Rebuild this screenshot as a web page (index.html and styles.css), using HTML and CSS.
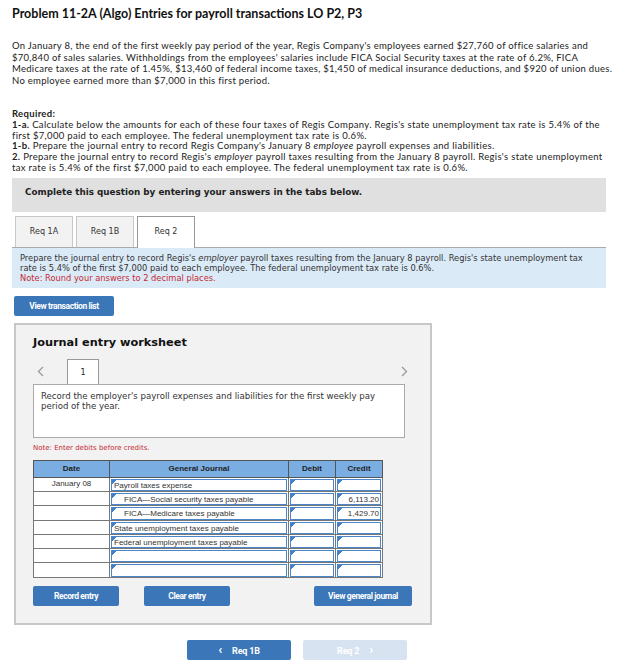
FILE: index.html
```html
<!DOCTYPE html>
<html lang="en">
<head>
    <meta charset="UTF-8">
    <title>Problem 11-2A (Algo)</title>
    <link rel="stylesheet" href="styles.css">
</head>
<body>
    <div class="page">
        <h1>Problem 11-2A (Algo) Entries for payroll transactions LO P2, P3</h1>
        <p class="intro">On January 8, the end of the first weekly pay period of the year, Regis Company's employees earned $27,760 of office salaries and $70,840 of sales salaries. Withholdings from the employees' salaries include FICA Social Security taxes at the rate of 6.2%, FICA Medicare taxes at the rate of 1.45%, $13,460 of federal income taxes, $1,450 of medical insurance deductions, and $920 of union dues. No employee earned more than $7,000 in this first period.</p>

        <div class="required">
            <b>Required:</b><br>
            <b>1-a.</b> Calculate below the amounts for each of these four taxes of Regis Company. Regis's state unemployment tax rate is 5.4% of the first $7,000 paid to each employee. The federal unemployment tax rate is 0.6%.<br>
            <b>1-b.</b> Prepare the journal entry to record Regis Company's January 8 <i>employee</i> payroll expenses and liabilities.<br>
            <b>2.</b> Prepare the journal entry to record Regis's <i>employer</i> payroll taxes resulting from the January 8 payroll. Regis's state unemployment tax rate is 5.4% of the first $7,000 paid to each employee. The federal unemployment tax rate is 0.6%.
        </div>

        <div class="complete-bar">Complete this question by entering your answers in the tabs below.</div>

        <div class="tabs">
            <div class="tab">Req 1A</div>
            <div class="tab">Req 1B</div>
            <div class="tab active">Req 2</div>
        </div>
        <div class="instructions">
            Prepare the journal entry to record Regis's <i>employer</i> payroll taxes resulting from the January 8 payroll. Regis's state unemployment tax rate is 5.4% of the first $7,000 paid to each employee. The federal unemployment tax rate is 0.6%.<br>
            <span class="red">Note: Round your answers to 2 decimal places.</span>
        </div>

        <button class="btn btn-list">View transaction list</button>

        <div class="worksheet">
            <h2>Journal entry worksheet</h2>
            <div class="pager">
                <span class="arrow">
                    <svg width="7" height="11" viewBox="0 0 7 11"><polyline points="6,1 1.5,5.5 6,10" fill="none" stroke="#9a9a9a" stroke-width="1.3"/></svg>
                </span>
                <span class="page-tab">1</span>
                <span class="arrow arrow-right">
                    <svg width="7" height="11" viewBox="0 0 7 11"><polyline points="1,1 5.5,5.5 1,10" fill="none" stroke="#9a9a9a" stroke-width="1.3"/></svg>
                </span>
            </div>
            <div class="record-box">Record the employer's payroll expenses and liabilities for the first weekly pay period of the year.</div>
            <div class="note">Note: Enter debits before credits.</div>

            <table class="journal">
                <thead>
                    <tr>
                        <th class="col-date">Date</th>
                        <th class="col-acct">General Journal</th>
                        <th class="col-num">Debit</th>
                        <th class="col-num">Credit</th>
                    </tr>
                </thead>
                <tbody>
                    <tr>
                        <td class="date">January 08</td>
                        <td><div class="cell">Payroll taxes expense</div></td>
                        <td><div class="cell"></div></td>
                        <td><div class="cell"></div></td>
                    </tr>
                    <tr>
                        <td class="date"></td>
                        <td><div class="cell indent">FICA—Social security taxes payable</div></td>
                        <td><div class="cell"></div></td>
                        <td><div class="cell num">6,113.20</div></td>
                    </tr>
                    <tr>
                        <td class="date"></td>
                        <td><div class="cell indent">FICA—Medicare taxes payable</div></td>
                        <td><div class="cell"></div></td>
                        <td><div class="cell num">1,429.70</div></td>
                    </tr>
                    <tr>
                        <td class="date"></td>
                        <td><div class="cell">State unemployment taxes payable</div></td>
                        <td><div class="cell"></div></td>
                        <td><div class="cell"></div></td>
                    </tr>
                    <tr>
                        <td class="date"></td>
                        <td><div class="cell">Federal unemployment taxes payable</div></td>
                        <td><div class="cell"></div></td>
                        <td><div class="cell"></div></td>
                    </tr>
                    <tr>
                        <td class="date"></td>
                        <td><div class="cell"></div></td>
                        <td><div class="cell"></div></td>
                        <td><div class="cell"></div></td>
                    </tr>
                    <tr>
                        <td class="date"></td>
                        <td><div class="cell"></div></td>
                        <td><div class="cell"></div></td>
                        <td><div class="cell"></div></td>
                    </tr>
                </tbody>
            </table>

            <div class="actions">
                <button class="btn btn-action">Record entry</button>
                <button class="btn btn-action btn-clear">Clear entry</button>
                <button class="btn btn-action btn-view">View general journal</button>
            </div>
        </div>

        <div class="nav">
            <button class="btn btn-nav"><span class="chev">&lsaquo;</span>Req 1B</button>
            <button class="btn btn-nav disabled">Req 2<span class="chev chev-r">&rsaquo;</span></button>
        </div>
    </div>
</body>
</html>
```

FILE: styles.css
```css
body {
    margin: 0;
    background: #fff;
    color: #222;
    font-family: Lato, "Open Sans", sans-serif;
}
.page {
    width: 594px;
    padding: 6px 12px 0 12px;
}
h1 {
    font-size: 12.5px;
    font-weight: bold;
    margin: 0 0 19px 0;
    color: #111;
}
.intro {
    font-size: 9.5px;
    line-height: 11.5px;
    letter-spacing: 0.28px;
    margin: 0 -10px 23px 0;
}
.required {
    font-size: 9.5px;
    line-height: 10.8px;
    letter-spacing: 0.32px;
    margin-bottom: 4px;
}
.complete-bar {
    background: #e0e0e0;
    height: 34px;
    box-sizing: border-box;
    padding: 9px 0 0 13px;
    font-family: "DejaVu Sans", Verdana, sans-serif;
    font-size: 8.8px;
    font-weight: bold;
    color: #222;
}
.tabs {
    display: flex;
    gap: 3px;
    margin: 4px 0 0 3px;
}
.tab {
    width: 56px;
    height: 30px;
    line-height: 30px;
    text-align: center;
    background: #f2f2f2;
    border: 1px solid #c8c8c8;
    border-bottom: none;
    font-family: "DejaVu Sans", Verdana, sans-serif;
    font-size: 8px;
    color: #333;
}
.tab.active {
    background: #fff;
    border-color: #999;
    height: 31px;
    margin-bottom: -1px;
}
.instructions {
    background: #dbeaf7;
    border-top: 1px solid #aaa;
    padding: 5px 16px 4px 8px;
    font-family: "DejaVu Sans", Verdana, sans-serif;
    font-size: 8.3px;
    line-height: 10.3px;
    color: #333;
}
.red {
    color: #c52a35;
}
.btn {
    border: none;
    border-radius: 2px;
    background: #3b76b9;
    color: #fff;
    font-family: Roboto, "Liberation Sans", sans-serif;
    font-weight: bold;
    font-size: 8.5px;
    letter-spacing: -0.4px;
    cursor: pointer;
    padding: 0;
}
.btn-list {
    display: block;
    width: 100px;
    height: 20px;
    margin: 8px 0 7px 2px;
}
.worksheet {
    box-sizing: border-box;
    width: 418px;
    height: 302px;
    margin-left: 2px;
    background: #f2f2f2;
    border: 2px solid #c8c8c8;
    padding: 0 0 0 17px;
}
.worksheet h2 {
    font-family: "DejaVu Sans", Verdana, sans-serif;
    font-size: 11.3px;
    font-weight: bold;
    margin: 11px 0 10px 0;
    color: #111;
}
.pager {
    display: flex;
    align-items: flex-end;
    height: 25px;
}
.arrow {
    width: 30px;
    height: 24px;
    display: flex;
    align-items: center;
    padding-left: 4px;
}
.arrow-right {
    margin-left: auto;
    margin-right: 22px;
    padding-left: 0;
    width: auto;
}
.page-tab {
    width: 30px;
    height: 24px;
    background: #fff;
    border: 1px solid #999;
    border-bottom: none;
    text-align: center;
    line-height: 26px;
    font-family: "DejaVu Sans", Verdana, sans-serif;
    font-size: 8px;
    color: #222;
}
.record-box {
    box-sizing: border-box;
    width: 372px;
    height: 54px;
    background: #fff;
    border: 1px solid #aaa;
    padding: 6px 6px 6px 7px;
    font-family: "DejaVu Sans", Verdana, sans-serif;
    font-size: 8.6px;
    line-height: 10.5px;
    color: #333;
}
.note {
    font-family: "DejaVu Sans", Verdana, sans-serif;
    font-size: 7px;
    color: #c52a35;
    margin: 6px 0 8px 0;
}
.journal {
    border-collapse: collapse;
    font-family: "Liberation Sans", Arial, sans-serif;
    font-size: 8px;
    color: #333;
    background: #fff;
}
.journal th {
    background: #7aaee3;
    border: 1px solid #555;
    height: 16px;
    padding: 0;
    font-weight: bold;
    color: #222;
}
.col-date { width: 75px; }
.col-acct { width: 178px; }
.col-num { width: 46px; }
.journal td {
    border: 1px solid #777;
    height: 13px;
    padding: 0;
}
.journal td.date {
    text-align: center;
    vertical-align: top;
    padding-top: 1px;
    height: 12px;
}
.cell {
    height: 10.3px;
    line-height: 11px;
    margin: 1px 1px 0 1px;
    border: 1px solid #4a86c8;
    background: #fff linear-gradient(135deg, #3f7fcc 3px, transparent 3px) no-repeat;
    padding: 0 1px 0 2px;
    white-space: nowrap;
    overflow: hidden;
}
.cell.indent {
    padding-left: 12px;
}
.cell.num {
    text-align: right;
}
.actions {
    display: flex;
    margin-top: 8px;
    width: 379px;
}
.btn-action {
    width: 86px;
    height: 20px;
}
.btn-clear {
    margin-left: 25px;
}
.btn-view {
    width: 98px;
    margin-left: auto;
}
.nav {
    display: flex;
    gap: 12px;
    margin: 15px 0 0 175px;
}
.btn-nav {
    width: 104px;
    height: 20px;
    font-size: 9px;
    letter-spacing: -0.2px;
}
.chev {
    font-size: 13px;
    margin-right: 10px;
}
.chev-r {
    margin-right: 0;
    margin-left: 10px;
}
.btn-nav.disabled {
    background: #d8e3f1;
    color: #fff;
}
```
